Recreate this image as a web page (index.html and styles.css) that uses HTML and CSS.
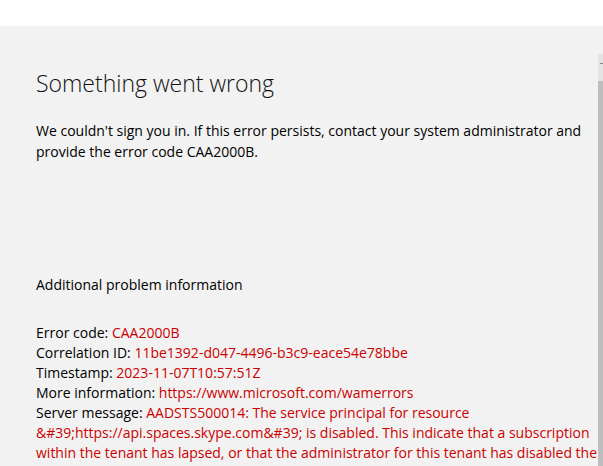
FILE: index.html
```html
<!DOCTYPE html>
<html lang="en">
<head>
    <meta charset="UTF-8">
    <title>Something went wrong</title>
    <link rel="stylesheet" href="styles.css">
</head>
<body>
    <div class="titlebar"></div>
    <div class="window">
        <div class="content">
            <h1>Something went wrong</h1>
            <p class="lead">We couldn't sign you in. If this error persists, contact your system administrator and provide the error code CAA2000B.</p>

            <h2>Additional problem information</h2>

            <div class="details">
                <div>Error code: <span class="err">CAA2000B</span></div>
                <div>Correlation ID: <span class="err">11be1392-d047-4496-b3c9-eace54e78bbe</span></div>
                <div>Timestamp: <span class="err">2023-11-07T10:57:51Z</span></div>
                <div>More information: <span class="err">https://www.microsoft.com/wamerrors</span></div>
                <div>Server message: <span class="err">AADSTS500014: The service principal for resource &amp;#39;https://api.spaces.skype.com&amp;#39; is disabled. This indicate that a subscription within the tenant has lapsed, or that the administrator for this tenant has disabled the application, preventing tokens from being issued for it.</span></div>
            </div>
        </div>
        <div class="scrollbar">
            <div class="scroll-up"></div>
            <div class="scroll-thumb"></div>
        </div>
    </div>
</body>
</html>
```

FILE: styles.css
```css
body {
    margin: 0;
    font-family: "Open Sans", "Noto Sans", sans-serif;
    color: #000;
    background: #f2f2f2;
    height: 466px;
    overflow: hidden;
}

.titlebar {
    height: 26px;
    background: #fff;
}

.window {
    display: flex;
    height: 440px;
    background: #f2f2f2;
}

.content {
    flex: 1;
    padding: 0 0 0 36px;
    font-size: 14px;
    line-height: 20px;
}

h1 {
    margin: 42px 0 0 0;
    font-size: 23px;
    font-weight: 300;
    line-height: 30px;
    color: #111;
}

.lead {
    margin: 22px 0 0 0;
    line-height: 21px;
}

h2 {
    margin: 113px 0 0 0;
    font-size: 14px;
    font-weight: 400;
    line-height: 20px;
}

.details {
    margin-top: 28px;
}

.err {
    color: #cc0000;
}

.scrollbar {
    width: 5px;
    margin-top: 28px;
    display: flex;
    flex-direction: column;
}

.scroll-up {
    height: 27px;
    background: #e3e3e3;
    position: relative;
}

.scroll-up::after {
    content: '';
    position: absolute;
    left: 2px;
    top: 9px;
    width: 3px;
    height: 1px;
    background: #888;
}

.scroll-thumb {
    flex: 1;
    background: #bebebe;
}
```
